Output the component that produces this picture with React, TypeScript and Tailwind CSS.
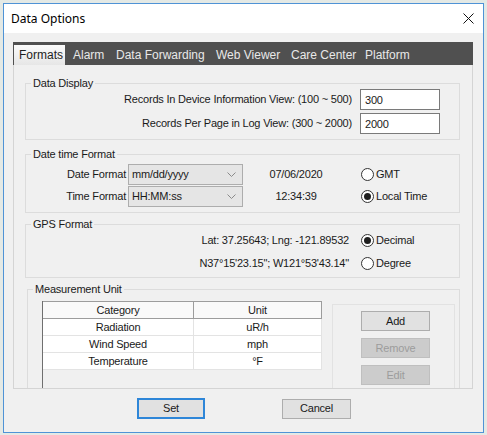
import React from "react";

function Radio({ checked, label }: { checked?: boolean; label: string }) {
  return (
    <div className="flex items-center gap-[2px]">
      <span className="w-[13px] h-[13px] rounded-full border border-[#333333] bg-white flex items-center justify-center">
        {checked && <span className="w-[7px] h-[7px] rounded-full bg-[#1f1f1f]" />}
      </span>
      <span>{label}</span>
    </div>
  );
}

function Combo({ value }: { value: string }) {
  return (
    <div className="w-[115px] h-[21px] border border-[#adadad] bg-[#e5e5e5] flex items-center justify-between pl-[3px] pr-[6px]">
      <span>{value}</span>
      <svg width="9" height="6" viewBox="0 0 9 6" fill="none">
        <path d="M0.5 0.5 L4.5 4.5 L8.5 0.5" stroke="#8a8a8a" strokeWidth="1" />
      </svg>
    </div>
  );
}

function Btn({ label, disabled, focused }: { label: string; disabled?: boolean; focused?: boolean }) {
  return (
    <div
      className={
        disabled
          ? "w-[69px] h-[20px] flex items-center justify-center bg-[#cccccc] border border-[#bfbfbf] text-[#9c9c9c]"
          : focused
          ? "w-[68px] h-[21px] flex items-center justify-center bg-[#e1e1e1] border-2 border-[#2e86d8] text-[#1a1a1a]"
          : "w-[69px] h-[20px] flex items-center justify-center bg-[#e1e1e1] border border-[#adadad] text-[#1a1a1a]"
      }
    >
      {label}
    </div>
  );
}

const tabs = [
  { label: "Alarm", w: "w-[45px] pl-[8px]" },
  { label: "Data Forwarding", w: "w-[100px] pl-[6px]" },
  { label: "Web Viewer", w: "w-[75px] pl-[6px]" },
  { label: "Care Center", w: "w-[73px] pl-[6px]" },
  { label: "Platform", w: "w-[70px] pl-[7px]" },
];

const units = [
  ["Radiation", "uR/h"],
  ["Wind Speed", "mph"],
  ["Temperature", "°F"],
];

export default function App() {
  return (
    <div className="w-[487px] h-[435px] bg-[#e4e9e5] pl-[3px] pt-[3px] font-['Liberation_Sans',Arial,sans-serif] text-[11px] tracking-[-0.2px] text-[#1a1a1a] overflow-hidden">
      <div className="w-[481px] h-[430px] border border-[#4f93d6] bg-[#f0f0f0] flex flex-col">
        {/* Title bar */}
        <div className="h-[29px] bg-white flex items-center justify-between pl-[7px] pr-[9px] font-['Noto_Sans',sans-serif] text-[12px] tracking-normal text-black">
          <span>Data Options</span>
          <svg width="11" height="11" viewBox="0 0 11 11" fill="none">
            <path d="M0.5 0.5 L10.5 10.5 M10.5 0.5 L0.5 10.5" stroke="#111" strokeWidth="1" />
          </svg>
        </div>

        <div className="pl-[9px] pt-[9px]">
          {/* Tab strip */}
          <div className="w-[460px] h-[23px] bg-[#505050] flex items-end text-[12px] tracking-normal whitespace-nowrap">
            <div className="ml-[1px] w-[51px] h-[20px] pl-[5px] flex items-center bg-gradient-to-b from-[#fbfbfb] to-[#e6e6e6] text-[#1e1e1e]">
              Formats
            </div>
            {tabs.map((t) => (
              <div key={t.label} className={`${t.w} h-[20px] flex items-center text-[#e8e8e8]`}>
                {t.label}
              </div>
            ))}
          </div>

          {/* Tab panel */}
          <div className="w-[460px] h-[324px] border border-t-0 border-[#d4d4d4] px-[11px] pt-[12px] overflow-hidden">
            {/* Data Display */}
            <fieldset className="w-[435px] border border-[#dcdcdc] pb-[5px]">
              <legend className="ml-[5px] px-[2px] leading-[12px]">Data Display</legend>
              <div className="flex flex-col gap-[3px] pr-[19px]">
                <div className="flex items-center justify-end gap-[8px]">
                  <span>Records In Device Information View: (100 ~ 500)</span>
                  <div className="w-[80px] h-[21px] border border-[#7a7a7a] bg-white pl-[4px] pt-[2px]">300</div>
                </div>
                <div className="flex items-center justify-end gap-[8px]">
                  <span>Records Per Page in Log View: (300 ~ 2000)</span>
                  <div className="w-[80px] h-[21px] border border-[#7a7a7a] bg-white pl-[4px] pt-[2px]">2000</div>
                </div>
              </div>
            </fieldset>

            {/* Date time Format */}
            <fieldset className="w-[435px] mt-[8px] border border-[#dcdcdc] pb-[5px]">
              <legend className="ml-[5px] px-[2px] leading-[12px]">Date time Format</legend>
              <div className="flex flex-col gap-[1px] pt-[4px]">
                <div className="flex items-center h-[21px]">
                  <span className="w-[100px] text-right">Date Format</span>
                  <div className="ml-[2px]">
                    <Combo value="mm/dd/yyyy" />
                  </div>
                  <span className="w-[106px] text-center">07/06/2020</span>
                  <div className="ml-[12px]">
                    <Radio label="GMT" />
                  </div>
                </div>
                <div className="flex items-center h-[21px]">
                  <span className="w-[100px] text-right">Time Format</span>
                  <div className="ml-[2px]">
                    <Combo value="HH:MM:ss" />
                  </div>
                  <span className="w-[106px] text-center">12:34:39</span>
                  <div className="ml-[12px]">
                    <Radio checked label="Local Time" />
                  </div>
                </div>
              </div>
            </fieldset>

            {/* GPS Format */}
            <fieldset className="w-[435px] mt-[5px] border border-[#dcdcdc] pb-[3px]">
              <legend className="ml-[5px] px-[2px] leading-[12px]">GPS Format</legend>
              <div className="flex flex-col gap-[1px] -mt-[1px]">
                <div className="flex items-center h-[22px]">
                  <span className="w-[323px] text-right">Lat: 37.25643; Lng: -121.89532</span>
                  <div className="ml-[12px]">
                    <Radio checked label="Decimal" />
                  </div>
                </div>
                <div className="flex items-center h-[22px]">
                  <span className="w-[323px] text-right">N37°15'23.15"; W121°53'43.14"</span>
                  <div className="ml-[12px]">
                    <Radio label="Degree" />
                  </div>
                </div>
              </div>
            </fieldset>

            {/* Measurement Unit */}
            <fieldset className="w-[433px] ml-[2px] mt-[5px] border border-[#dcdcdc] pb-[10px]">
              <legend className="ml-[5px] px-[2px] leading-[12px]">Measurement Unit</legend>
              <div className="flex items-start pt-[6px]">
                <div className="ml-[14px] w-[280px] h-[100px] border-l border-[#6f6f6f]">
                  <div className="flex h-[18px] border border-l-0 border-[#9c9c9c] bg-[#f9f9f9]">
                    <div className="w-[151px] border-r border-[#9c9c9c] flex items-center justify-center">Category</div>
                    <div className="flex-1 flex items-center justify-center">Unit</div>
                  </div>
                  {units.map(([c, u]) => (
                    <div key={c} className="flex h-[17px] bg-white border-b border-r border-[#e3e3e3]">
                      <div className="w-[151px] border-r border-[#e3e3e3] flex items-center justify-center">{c}</div>
                      <div className="flex-1 flex items-center justify-center">{u}</div>
                    </div>
                  ))}
                </div>
                <div className="ml-[10px] mt-[3px] w-[123px] h-[100px] border border-[#e2e2e2] flex flex-col items-center gap-[7px] pt-[6px] pl-[4px]">
                  <Btn label="Add" />
                  <Btn label="Remove" disabled />
                  <Btn label="Edit" disabled />
                </div>
              </div>
            </fieldset>
          </div>

          {/* Bottom buttons */}
          <div className="flex items-center pl-[124px] gap-[77px] mt-[9px]">
            <Btn label="Set" focused />
            <Btn label="Cancel" />
          </div>
        </div>
      </div>
    </div>
  );
}
